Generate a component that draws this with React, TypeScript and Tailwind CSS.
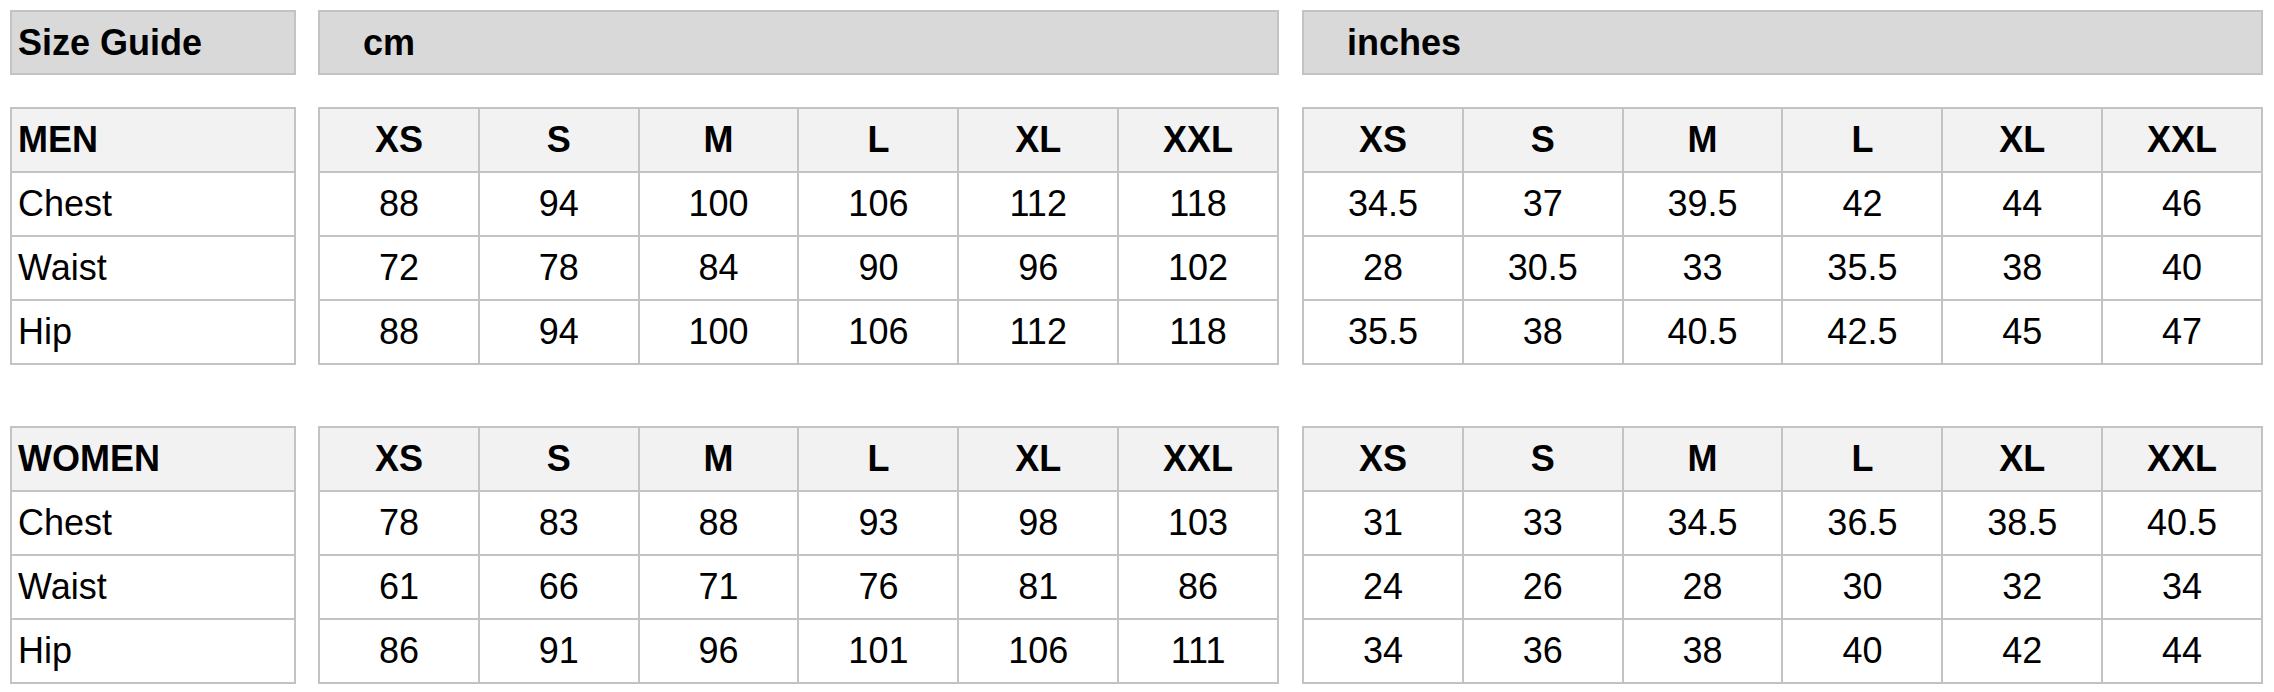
import type React from "react"

const sizes = ["XS", "S", "M", "L", "XL", "XXL"]

interface Section {
  title: string
  rows: { label: string; cm: string[]; inches: string[] }[]
}

const sections: Section[] = [
  {
    title: "MEN",
    rows: [
      { label: "Chest", cm: ["88", "94", "100", "106", "112", "118"], inches: ["34.5", "37", "39.5", "42", "44", "46"] },
      { label: "Waist", cm: ["72", "78", "84", "90", "96", "102"], inches: ["28", "30.5", "33", "35.5", "38", "40"] },
      { label: "Hip", cm: ["88", "94", "100", "106", "112", "118"], inches: ["35.5", "38", "40.5", "42.5", "45", "47"] },
    ],
  },
  {
    title: "WOMEN",
    rows: [
      { label: "Chest", cm: ["78", "83", "88", "93", "98", "103"], inches: ["31", "33", "34.5", "36.5", "38.5", "40.5"] },
      { label: "Waist", cm: ["61", "66", "71", "76", "81", "86"], inches: ["24", "26", "28", "30", "32", "34"] },
      { label: "Hip", cm: ["86", "91", "96", "101", "106", "111"], inches: ["34", "36", "38", "40", "42", "44"] },
    ],
  },
]

const HeadBox: React.FC<{ label: string; className: string; pad: string }> = ({ label, className, pad }) => (
  <div className={`${className} ${pad} h-[65px] flex items-center border-2 border-[#c3c3c3] bg-[#d9d9d9] font-bold`}>
    {label}
  </div>
)

const ValueTable: React.FC<{ values: string[][] }> = ({ values }) => (
  <table className="w-[961px] table-fixed border-collapse">
    <tbody>
      <tr className="bg-[#f2f2f2]">
        {sizes.map((s) => (
          <td key={s} className="h-[64px] border-2 border-[#c3c3c3] text-center font-bold">
            {s}
          </td>
        ))}
      </tr>
      {values.map((row, i) => (
        <tr key={i}>
          {row.map((v, j) => (
            <td key={j} className="h-[64px] border-2 border-[#c3c3c3] text-center">
              {v}
            </td>
          ))}
        </tr>
      ))}
    </tbody>
  </table>
)

export default function App() {
  return (
    <div className="flex flex-col bg-white p-[10px] text-[36px] leading-none text-black [font-family:'Liberation_Sans',Arial,sans-serif]">
      <div className="flex gap-[22px]">
        <HeadBox label="Size Guide" className="w-[286px]" pad="pl-[6px]" />
        <HeadBox label="cm" className="w-[961px]" pad="pl-[43px]" />
        <HeadBox label="inches" className="ml-px w-[961px]" pad="pl-[43px]" />
      </div>

      {sections.map((sec, k) => (
        <div key={sec.title} className={`flex gap-[22px] ${k === 0 ? "mt-[32px]" : "mt-[61px]"}`}>
          <table className="w-[286px] table-fixed border-collapse">
            <tbody>
              <tr className="bg-[#f2f2f2]">
                <td className="h-[64px] border-2 border-[#c3c3c3] pl-[6px] font-bold">{sec.title}</td>
              </tr>
              {sec.rows.map((r) => (
                <tr key={r.label}>
                  <td className="h-[64px] border-2 border-[#c3c3c3] pl-[6px]">{r.label}</td>
                </tr>
              ))}
            </tbody>
          </table>
          <ValueTable values={sec.rows.map((r) => r.cm)} />
          <div className="ml-px">
            <ValueTable values={sec.rows.map((r) => r.inches)} />
          </div>
        </div>
      ))}
    </div>
  )
}
